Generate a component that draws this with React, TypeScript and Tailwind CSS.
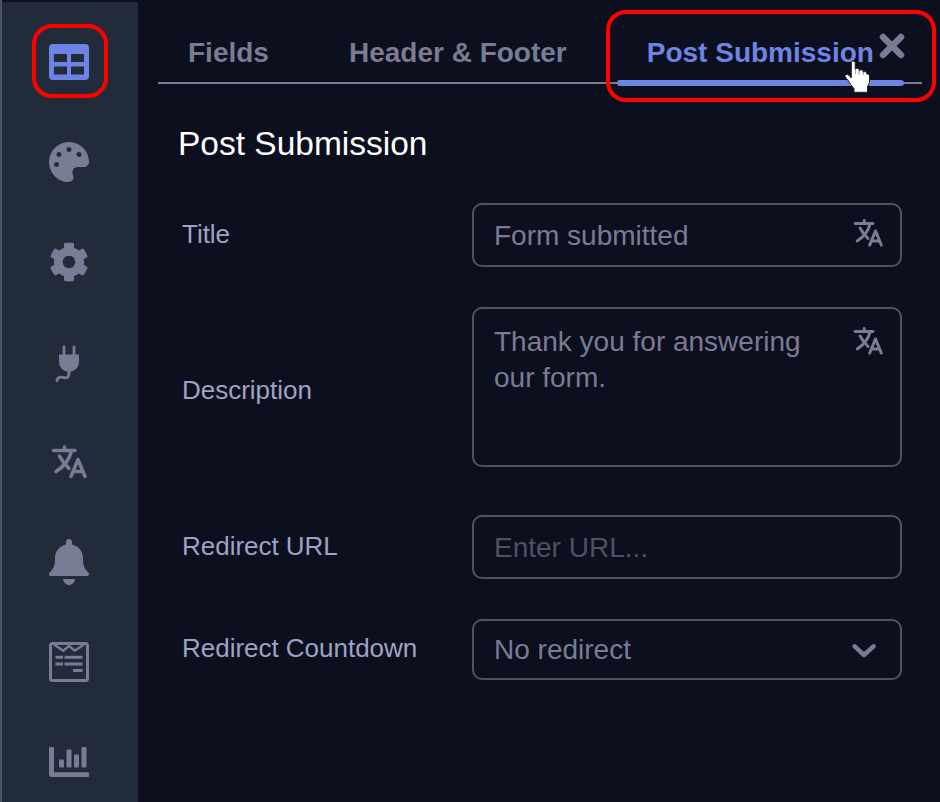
import { FaCog, FaPalette } from "react-icons/fa";
import { ReactNode } from "react";

const TableIcon = () => (
    <svg width="40" height="36" viewBox="0 0 40 36" fill="currentColor" fillRule="evenodd">
        <path d="M4 0H36A4 4 0 0 1 40 4V32A4 4 0 0 1 36 36H4A4 4 0 0 1 0 32V4A4 4 0 0 1 4 0ZM5 10V18H18V10ZM22 10V18H35V10ZM5 22.500V30.500H18V22.500ZM22 22.500V30.500H35V22.500Z" />
    </svg>
);

const PlugIcon = () => (
    <svg width="28" height="38" viewBox="0 0 28 38" fill="none" stroke="currentColor" strokeWidth="2.800" strokeLinecap="round" className="mt-[3px]">
        <path d="M9 2V11M19 2V11" />
        <path d="M4 9.500H24V17A10 10 0 0 1 4 17Z" fill="currentColor" stroke="none" />
        <path d="M14 26V28C14 31.500 12.500 33.500 9.500 32.800C6 31.600 2.500 32 1.900 35.800" />
    </svg>
);

const BellIcon = () => (
    <svg width="40" height="46" viewBox="0 0 40 46" fill="currentColor">
        <path d="M20 0C21.700 0 23 1.300 23 3V5.400C29.500 6.700 34 12 34 19C34 27 35.500 29.500 38.500 32.500C39.500 33.500 40 34.200 40 35.200C40 36.200 39.200 37 38 37H2C.8 37 0 36.200 0 35.200C0 34.200 .5 33.500 1.500 32.500C4.500 29.500 6 27 6 19C6 12 10.500 6.700 17 5.400V3C17 1.300 18.300 0 20 0Z" />
        <path d="M14 40H26C25.500 43.500 23 46 20 46S14.500 43.500 14 40Z" />
    </svg>
);

const ReceiptIcon = () => (
    <svg width="40" height="40" viewBox="0 0 40 40" fill="none" stroke="currentColor" strokeWidth="3">
        <rect x="1.500" y="1.500" width="37" height="37" rx="2" />
        <path d="M5 2.500L14.300 8.700L20 3.800L25.700 8.700L35 2.500" strokeWidth="2.300" />
        <path d="M6.500 15.300H14M15.500 15.300H33.500M6.500 22H14M15.500 22H33.500M24 28.500H33.500" />
    </svg>
);

const ChartIcon = () => (
    <svg width="40" height="31" viewBox="0 0 40 31" fill="currentColor">
        <path d="M1 0H4Q5 0 5 1V25.300H39Q40 25.300 40 26.300V29Q40 30 39 30H2Q0 30 0 28V1Q0 0 1 0Z" />
        <rect x="10" y="12.500" width="5" height="8" rx="1" />
        <rect x="17.500" y="2.500" width="5" height="18" rx="1" />
        <rect x="25" y="7.500" width="5" height="13" rx="1" />
        <rect x="32.500" y="0" width="5" height="20.500" rx="1" />
    </svg>
);

const TranslateIcon = ({ size, className }: { size: number; className?: string }) => (
    <svg width={size} height={size} viewBox="0 0 36 36" fill="none" stroke="currentColor" strokeWidth="3.500" strokeLinecap="round" strokeLinejoin="round" className={className}>
        <path d="M2.500 6.500H24M13.500 3V6M20.500 7C18.500 15 13 22.500 5 27.500M8.500 12C11 17 14 20.500 18 24.500" />
        <path d="M20 32.500L27 15.500L34 32.500M22.500 27.500H31.500" />
    </svg>
);

const HandCursor = () => (
    <svg width="28" height="34" viewBox="0 0 28 34" className="absolute left-[844px] top-[60px]">
        <path d="M7.300 2Q7.300 1 9 1T11.200 2.500V9Q13 7.500 15.200 9V10.500Q17.500 9 19.200 10.500V12Q22 10.500 22.700 13V14Q25.500 13.500 25.500 16V22.500L23.500 26.500V32.300H10V28.500L6.500 24.500L4.500 21L2.500 18.500L.8 16Q1 14 3.500 14.500L5.800 16L7.300 18Z" fill="#fff" stroke="#222" strokeWidth="1" />
        <path d="M11.300 9V14M15.200 10V14.500M19.200 11.500V15" stroke="#555" strokeWidth=".6" />
    </svg>
);

const sidebarItems = [
    { name: "form", icon: <TableIcon /> },
    { name: "design", icon: <FaPalette size={40} /> },
    { name: "settings", icon: <FaCog size={40} /> },
    { name: "integrations", icon: <PlugIcon /> },
    { name: "translations", icon: <TranslateIcon size={36} /> },
    { name: "notifications", icon: <BellIcon /> },
    { name: "receipt", icon: <ReceiptIcon /> },
    { name: "reports", icon: <ChartIcon /> },
];

const tabs = ["Fields", "Header & Footer", "Post Submission"];

function Row({ label, labelClass = "pb-0.5", children }: { label: string; labelClass?: string; children: ReactNode }) {
    return (
        <div className="flex items-center">
            <div className={`w-[290px] shrink-0 text-[26px] leading-8 tracking-[-0.02px] text-[#9fa3c3] ${labelClass}`}>{label}</div>
            {children}
        </div>
    );
}

export default function App() {
    return (
        <div className="relative flex h-[802px] w-[940px] overflow-hidden bg-[#0c0f1e] font-['Liberation_Sans',Arial,sans-serif] text-[#787c95]">
            {/* Sidebar */}
            <div className="w-[138px] shrink-0 border-l-2 border-[#4a545f] pt-0.5">
                <nav className="flex h-[800px] flex-col overflow-hidden bg-[#222b3a] pt-[10px]">
                    {sidebarItems.map((item, index) => (
                        <button
                            key={item.name}
                            className={`flex h-[100px] w-[134px] shrink-0 items-center justify-center ${index === 0 ? "text-[#6f83e5]" : ""}`}
                        >
                            {item.icon}
                        </button>
                    ))}
                </nav>
            </div>

            <main className="flex-1 pt-0.5 pl-5">
                {/* Tabs */}
                <div className="relative flex h-[82px] w-[764px] gap-5 border-b-2 border-[#787c95]">
                    {tabs.map((tab) => (
                        <button
                            key={tab}
                            className={`relative px-[30px] pt-[21px] text-[28px] leading-8 font-bold whitespace-nowrap ${tab === "Post Submission" ? "text-[#6f83e5]" : ""}`}
                        >
                            {tab}
                            {tab === "Post Submission" && (
                                <span className="absolute inset-x-0 -bottom-1 h-1.5 rounded-full bg-[#6f83e5]" />
                            )}
                        </button>
                    ))}
                </div>

                <h2 className="mt-10 ml-5 text-[33.5px] leading-10 text-white">Post Submission</h2>

                {/* Form */}
                <div className="mt-[39px] ml-6 flex w-[720px] flex-col gap-10">
                    <Row label="Title">
                        <div className="flex h-16 flex-1 justify-between rounded-[10px] border-2 border-[#505264] pt-[15px] pr-[17px] pl-5 text-[28px] leading-8">
                            Form submitted
                            <TranslateIcon size={30} className="-mt-0.5" />
                        </div>
                    </Row>
                    <Row label="Description" labelClass="pt-1.5">
                        <div className="flex h-40 flex-1 justify-between rounded-[10px] border-2 border-[#505264] pt-[15px] pr-[17px] pl-5 text-[28px] leading-9">
                            <p className="w-[320px]">Thank you for answering our form.</p>
                            <TranslateIcon size={30} className="mt-0.5" />
                        </div>
                    </Row>
                    <div className="mt-2">
                        <Row label="Redirect URL">
                            <div className="h-16 flex-1 rounded-[10px] border-2 border-[#505264] pt-[15px] pl-5 text-[28px] leading-8 text-[#4f5163]">
                                Enter URL...
                            </div>
                        </Row>
                    </div>
                    <Row label="Redirect Countdown" labelClass="pb-[3px]">
                        <div className="flex h-[61px] flex-1 items-center justify-between rounded-[10px] border-2 border-[#505264] pr-[23px] pl-5 text-[28px] leading-8">
                            No redirect
                            <svg width="26" height="16" viewBox="0 0 26 16" fill="none" stroke="currentColor" strokeWidth="4.500" strokeLinecap="round" strokeLinejoin="round" className="mt-px">
                                <path d="M3.700 4.300L13 13L22.500 4.300" />
                            </svg>
                        </div>
                    </Row>
                </div>
            </main>

            <svg width="26" height="26" viewBox="0 0 26 26" stroke="currentColor" strokeWidth="6.500" strokeLinecap="round" className="absolute left-[879px] top-[33px]">
                <path d="M4 4L22 22M22 4L4 22" />
            </svg>

            {/* Highlights */}
            <div className="absolute left-8 top-6 h-[74px] w-[76px] rounded-[20px] border-4 border-[#ff0000]" />
            <div className="absolute left-[606px] top-[10px] h-[92px] w-[330px] rounded-[20px] border-4 border-[#ff0000]" />
            <HandCursor />
        </div>
    );
}
